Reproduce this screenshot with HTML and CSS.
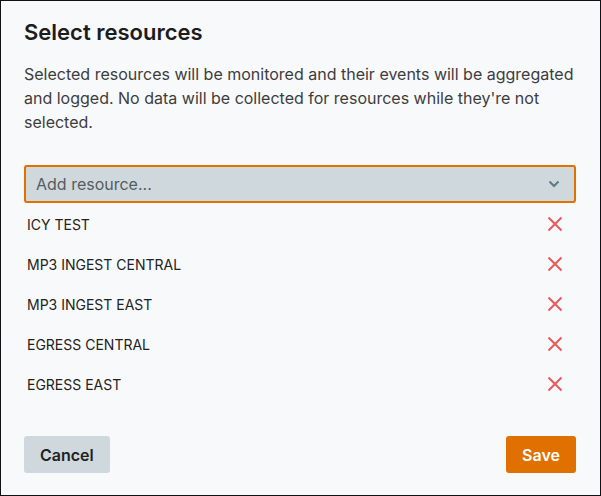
FILE: index.html
```html
<!DOCTYPE html>
<html>
<head>
<meta charset="utf-8">
<link rel="stylesheet" href="styles.css">
</head>
<body>
<div class="dialog">
  <h1 class="title">Select resources</h1>
  <p class="desc">Selected resources will be monitored and their events will be aggregated and logged. No data will be collected for resources while they're not selected.</p>
  <div class="select">
    <span class="placeholder">Add resource...</span>
    <svg class="chevron" width="12" height="8" viewBox="0 0 12 8"><path d="M1.5 1.5 L6 6 L10.5 1.5" fill="none" stroke="#5f7886" stroke-width="2"/></svg>
  </div>
  <ul class="list">
    <li class="item"><span>ICY TEST</span><svg class="x" width="16" height="16" viewBox="0 0 16 16"><path d="M1.5 1.5 L14.5 14.5 M14.5 1.5 L1.5 14.5" stroke="#e8585a" stroke-width="2"/></svg></li>
    <li class="item"><span>MP3 INGEST CENTRAL</span><svg class="x" width="16" height="16" viewBox="0 0 16 16"><path d="M1.5 1.5 L14.5 14.5 M14.5 1.5 L1.5 14.5" stroke="#e8585a" stroke-width="2"/></svg></li>
    <li class="item"><span>MP3 INGEST EAST</span><svg class="x" width="16" height="16" viewBox="0 0 16 16"><path d="M1.5 1.5 L14.5 14.5 M14.5 1.5 L1.5 14.5" stroke="#e8585a" stroke-width="2"/></svg></li>
    <li class="item"><span>EGRESS CENTRAL</span><svg class="x" width="16" height="16" viewBox="0 0 16 16"><path d="M1.5 1.5 L14.5 14.5 M14.5 1.5 L1.5 14.5" stroke="#e8585a" stroke-width="2"/></svg></li>
    <li class="item"><span>EGRESS EAST</span><svg class="x" width="16" height="16" viewBox="0 0 16 16"><path d="M1.5 1.5 L14.5 14.5 M14.5 1.5 L1.5 14.5" stroke="#e8585a" stroke-width="2"/></svg></li>
  </ul>
  <div class="actions">
    <button class="btn cancel">Cancel</button>
    <button class="btn save">Save</button>
  </div>
</div>
</body>
</html>
```
FILE: styles.css
```css
html, body {
  margin: 0;
  padding: 0;
}
body {
  font-family: Inter, "Noto Sans", sans-serif;
  background: #f8f9fb;
}
.dialog {
  box-sizing: border-box;
  width: 601px;
  height: 496px;
  border: 1px solid #111;
  background: #f8f9fb;
  padding: 17px 24px 0 23px;
  display: flex;
  flex-direction: column;
}
.title {
  margin: 0;
  font-size: 22px;
  line-height: 28px;
  font-weight: 600;
  color: #1c1c1c;
}
.desc {
  margin: 16px 0 0 0;
  font-size: 16px;
  line-height: 24px;
  color: #3d3d3d;
}
.select {
  margin-top: 31px;
  height: 38px;
  box-sizing: border-box;
  border: 2px solid #e07000;
  border-radius: 3px;
  background: #cfd8dc;
  display: flex;
  align-items: center;
  justify-content: space-between;
  padding: 0 14px 0 10px;
}
.placeholder {
  font-size: 16px;
  color: #555c60;
}
.chevron {
  display: block;
}
.list {
  list-style: none;
  margin: 1px 0 0 0;
  padding: 0;
}
.item {
  height: 40px;
  display: flex;
  align-items: center;
  justify-content: space-between;
  padding: 0 13px 0 3px;
  font-size: 14px;
  color: #222;
}
.x {
  display: block;
}
.actions {
  margin-top: 32px;
  display: flex;
  justify-content: space-between;
}
.btn {
  font-family: Inter, "Noto Sans", sans-serif;
  font-size: 16px;
  font-weight: 600;
  height: 37px;
  border: none;
  border-radius: 3px;
  padding: 0 16px;
}
.cancel {
  background: #cfd8dc;
  color: #222;
}
.save {
  background: #e07000;
  color: #fff;
}
```
